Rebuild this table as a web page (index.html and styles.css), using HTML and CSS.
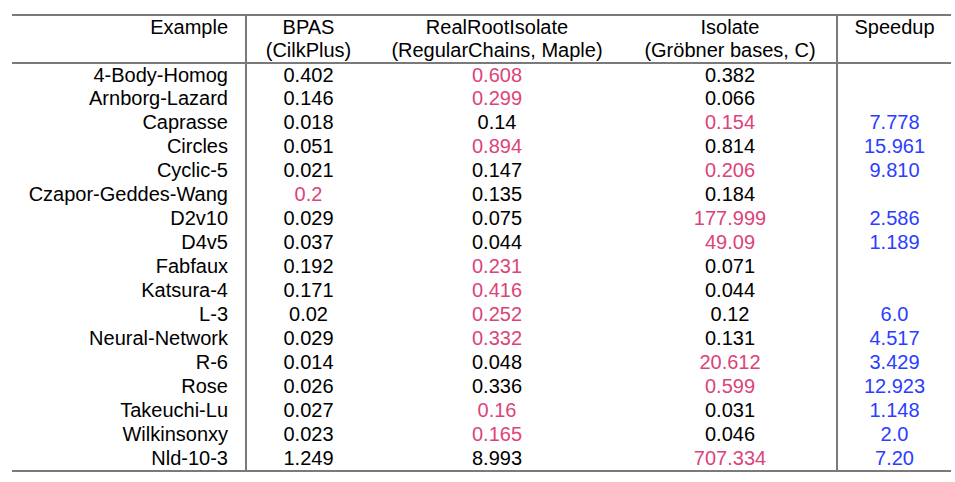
FILE: index.html
```html
<!DOCTYPE html>
<html>
<head>
<meta charset="utf-8">
<link rel="stylesheet" href="styles.css">
</head>
<body>
<table class="results">
  <colgroup>
    <col class="c-ex"><col class="c-bpas"><col class="c-rri"><col class="c-iso"><col class="c-sp">
  </colgroup>
  <thead>
    <tr>
      <th class="ex">Example</th>
      <th class="sep">BPAS<br>(CilkPlus)</th>
      <th>RealRootIsolate<br>(RegularChains, Maple)</th>
      <th>Isolate<br>(Gröbner bases, C)</th>
      <th class="sep sp">Speedup<br>&nbsp;</th>
    </tr>
  </thead>
  <tbody>
    <tr><td class="ex">4-Body-Homog</td><td class="sep">0.402</td><td class="pk">0.608</td><td>0.382</td><td class="sep bl"></td></tr>
    <tr><td class="ex">Arnborg-Lazard</td><td class="sep">0.146</td><td class="pk">0.299</td><td>0.066</td><td class="sep bl"></td></tr>
    <tr><td class="ex">Caprasse</td><td class="sep">0.018</td><td>0.14</td><td class="pk">0.154</td><td class="sep bl">7.778</td></tr>
    <tr><td class="ex">Circles</td><td class="sep">0.051</td><td class="pk">0.894</td><td>0.814</td><td class="sep bl">15.961</td></tr>
    <tr><td class="ex">Cyclic-5</td><td class="sep">0.021</td><td>0.147</td><td class="pk">0.206</td><td class="sep bl">9.810</td></tr>
    <tr><td class="ex">Czapor-Geddes-Wang</td><td class="sep pk">0.2</td><td>0.135</td><td>0.184</td><td class="sep bl"></td></tr>
    <tr><td class="ex">D2v10</td><td class="sep">0.029</td><td>0.075</td><td class="pk">177.999</td><td class="sep bl">2.586</td></tr>
    <tr><td class="ex">D4v5</td><td class="sep">0.037</td><td>0.044</td><td class="pk">49.09</td><td class="sep bl">1.189</td></tr>
    <tr><td class="ex">Fabfaux</td><td class="sep">0.192</td><td class="pk">0.231</td><td>0.071</td><td class="sep bl"></td></tr>
    <tr><td class="ex">Katsura-4</td><td class="sep">0.171</td><td class="pk">0.416</td><td>0.044</td><td class="sep bl"></td></tr>
    <tr><td class="ex">L-3</td><td class="sep">0.02</td><td class="pk">0.252</td><td>0.12</td><td class="sep bl">6.0</td></tr>
    <tr><td class="ex">Neural-Network</td><td class="sep">0.029</td><td class="pk">0.332</td><td>0.131</td><td class="sep bl">4.517</td></tr>
    <tr><td class="ex">R-6</td><td class="sep">0.014</td><td>0.048</td><td class="pk">20.612</td><td class="sep bl">3.429</td></tr>
    <tr><td class="ex">Rose</td><td class="sep">0.026</td><td>0.336</td><td class="pk">0.599</td><td class="sep bl">12.923</td></tr>
    <tr><td class="ex">Takeuchi-Lu</td><td class="sep">0.027</td><td class="pk">0.16</td><td>0.031</td><td class="sep bl">1.148</td></tr>
    <tr><td class="ex">Wilkinsonxy</td><td class="sep">0.023</td><td class="pk">0.165</td><td>0.046</td><td class="sep bl">2.0</td></tr>
    <tr><td class="ex">Nld-10-3</td><td class="sep">1.249</td><td>8.993</td><td class="pk">707.334</td><td class="sep bl">7.20</td></tr>
  </tbody>
</table>
</body>
</html>
```
FILE: styles.css
```css
html, body {
  margin: 0;
  padding: 0;
  background: #ffffff;
}
body {
  padding: 14px 0 0 12px;
  font-family: "Liberation Sans", Arial, sans-serif;
  font-size: 20px;
  color: #000;
}
.results {
  border-collapse: collapse;
  table-layout: fixed;
  width: 939px;
  border-top: 2px solid #7a7a7a;
  border-bottom: 2px solid #7a7a7a;
}
.c-ex { width: 234px; }
.c-bpas { width: 124px; }
.c-rri { width: 254px; }
.c-iso { width: 213px; }
.c-sp { width: 114px; }
.results th,
.results td {
  padding: 0;
  text-align: center;
  font-weight: normal;
  white-space: nowrap;
}
.results td {
  line-height: 24px;
  height: 24px;
  padding-bottom: 0;
}
.results thead th {
  border-bottom: 2px solid #7a7a7a;
  vertical-align: top;
  line-height: 23px;
}
.results tbody tr:first-child td {
  line-height: 22px;
  height: 22px;
}
.results .ex {
  text-align: right;
  padding-right: 17px;
}
.results .sep {
  border-left: 2px solid #7a7a7a;
}
.pk { color: #dc4479; }
.bl { color: #2b3dff; }
```
